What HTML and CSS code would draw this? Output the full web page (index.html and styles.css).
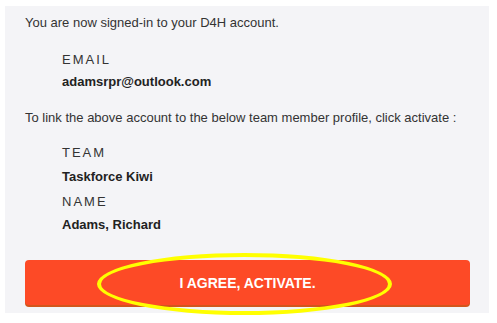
FILE: index.html
```html
<!DOCTYPE html>
<html>
<head>
<meta charset="utf-8">
<link rel="stylesheet" href="styles.css">
</head>
<body>
<div class="panel">
  <p class="intro">You are now signed-in to your D4H account.</p>
  <div class="field first">
    <div class="label">EMAIL</div>
    <div class="value">adamsrpr@outlook.com</div>
  </div>
  <p class="link-text">To link the above account to the below team member profile, click activate :</p>
  <div class="field team">
    <div class="label">TEAM</div>
    <div class="value">Taskforce Kiwi</div>
  </div>
  <div class="field name">
    <div class="label">NAME</div>
    <div class="value">Adams, Richard</div>
  </div>
  <div class="button">I AGREE, ACTIVATE.<span class="highlight"></span></div>
</div>
</body>
</html>
```
FILE: styles.css
```css
html, body {
  margin: 0;
  padding: 0;
  background: #ffffff;
}
body {
  font-family: "Liberation Sans", Arial, sans-serif;
  font-size: 13px;
  color: #333333;
}
.panel {
  margin: 6px 8px 8px 5px;
  background: #f4f4f7;
  padding: 9px 19px 8px 20px;
}
.intro, .link-text {
  margin: 0;
  line-height: 16px;
}
.field {
  padding-left: 37px;
  display: flex;
  flex-direction: column;
  gap: 6px;
}
.field.first { margin-top: 21px; }
.link-text { margin-top: 20px; }
.field.team { margin-top: 19px; gap: 8px; }
.field.name { margin-top: 9px; gap: 7px; }
.label {
  line-height: 16px;
  letter-spacing: 2px;
}
.value {
  line-height: 16px;
  font-weight: bold;
  color: #222222;
}
.button {
  position: relative;
  margin-top: 27px;
  height: 45px;
  border-radius: 4px;
  background: #fd4a26;
  box-shadow: 0 2px 0 #d2561c;
  color: #ffffff;
  font-size: 14px;
  font-weight: bold;
  display: flex;
  align-items: center;
  justify-content: center;
  padding-top: 1px;
  box-sizing: border-box;
}
.highlight {
  position: absolute;
  left: 72px;
  top: -7px;
  width: 295px;
  height: 62px;
  box-sizing: border-box;
  border: 4px solid #ffff00;
  border-radius: 50%;
}
```
